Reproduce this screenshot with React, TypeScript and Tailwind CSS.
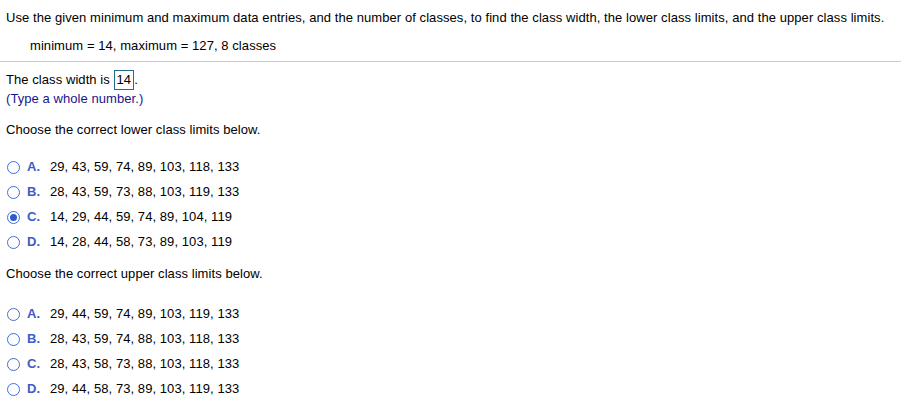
import React from "react";

type Option = { letter: string; text: string; checked?: boolean };

const lowerOptions: Option[] = [
  { letter: "A.", text: "29, 43, 59, 74, 89, 103, 118, 133" },
  { letter: "B.", text: "28, 43, 59, 73, 88, 103, 119, 133" },
  { letter: "C.", text: "14, 29, 44, 59, 74, 89, 104, 119", checked: true },
  { letter: "D.", text: "14, 28, 44, 58, 73, 89, 103, 119" },
];

const upperOptions: Option[] = [
  { letter: "A.", text: "29, 44, 59, 74, 89, 103, 119, 133" },
  { letter: "B.", text: "28, 43, 59, 74, 88, 103, 118, 133" },
  { letter: "C.", text: "28, 43, 58, 73, 88, 103, 118, 133" },
  { letter: "D.", text: "29, 44, 58, 73, 89, 103, 119, 133" },
];

const Radio = ({ checked }: { checked?: boolean }) => (
  <span className="w-[13px] h-[13px] rounded-full border border-[#3f6fd6] flex items-center justify-center shrink-0">
    {checked && <span className="w-[7px] h-[7px] rounded-full bg-[#2f5bc4]" />}
  </span>
);

const OptionList = ({ options }: { options: Option[] }) => (
  <div className="flex flex-col gap-[9px] pl-[7px]">
    {options.map((o) => (
      <div key={o.letter} className="flex items-center h-[16px]">
        <Radio checked={o.checked} />
        <span className="ml-[7px] w-[23px] font-bold text-[#3d5cc4]">{o.letter}</span>
        <span>{o.text}</span>
      </div>
    ))}
  </div>
);

export default function App() {
  return (
    <div className="w-[901px] h-[416px] bg-white text-[13px] tracking-[0.07px] text-black font-['Liberation_Sans',Arial,sans-serif] leading-[16px]">
      <div className="px-[6px] pt-[10px]">
        Use the given minimum and maximum data entries, and the number of classes, to find the class width, the lower class limits, and the upper class limits.
      </div>
      <div className="pl-[30px] pt-[12px] pb-[7px]">minimum = 14, maximum = 127, 8 classes</div>
      <div className="h-px bg-[#c9ccd9]" />

      <div className="px-[6px] pt-[8px]">
        <div className="flex items-center h-[20px]">
          <span>The class width is&nbsp;</span>
          <span className="border border-[#1f6e8c] px-[2px] h-[20px] flex items-center">14</span>
          <span>.</span>
        </div>
        <div className="text-[#16168c] mt-[1px]">(Type a whole number.)</div>

        <div className="mt-[15px]">Choose the correct lower class limits below.</div>
      </div>
      <div className="mt-[21px]">
        <OptionList options={lowerOptions} />
      </div>

      <div className="px-[6px] mt-[16px]">Choose the correct upper class limits below.</div>
      <div className="mt-[24px]">
        <OptionList options={upperOptions} />
      </div>
    </div>
  );
}
